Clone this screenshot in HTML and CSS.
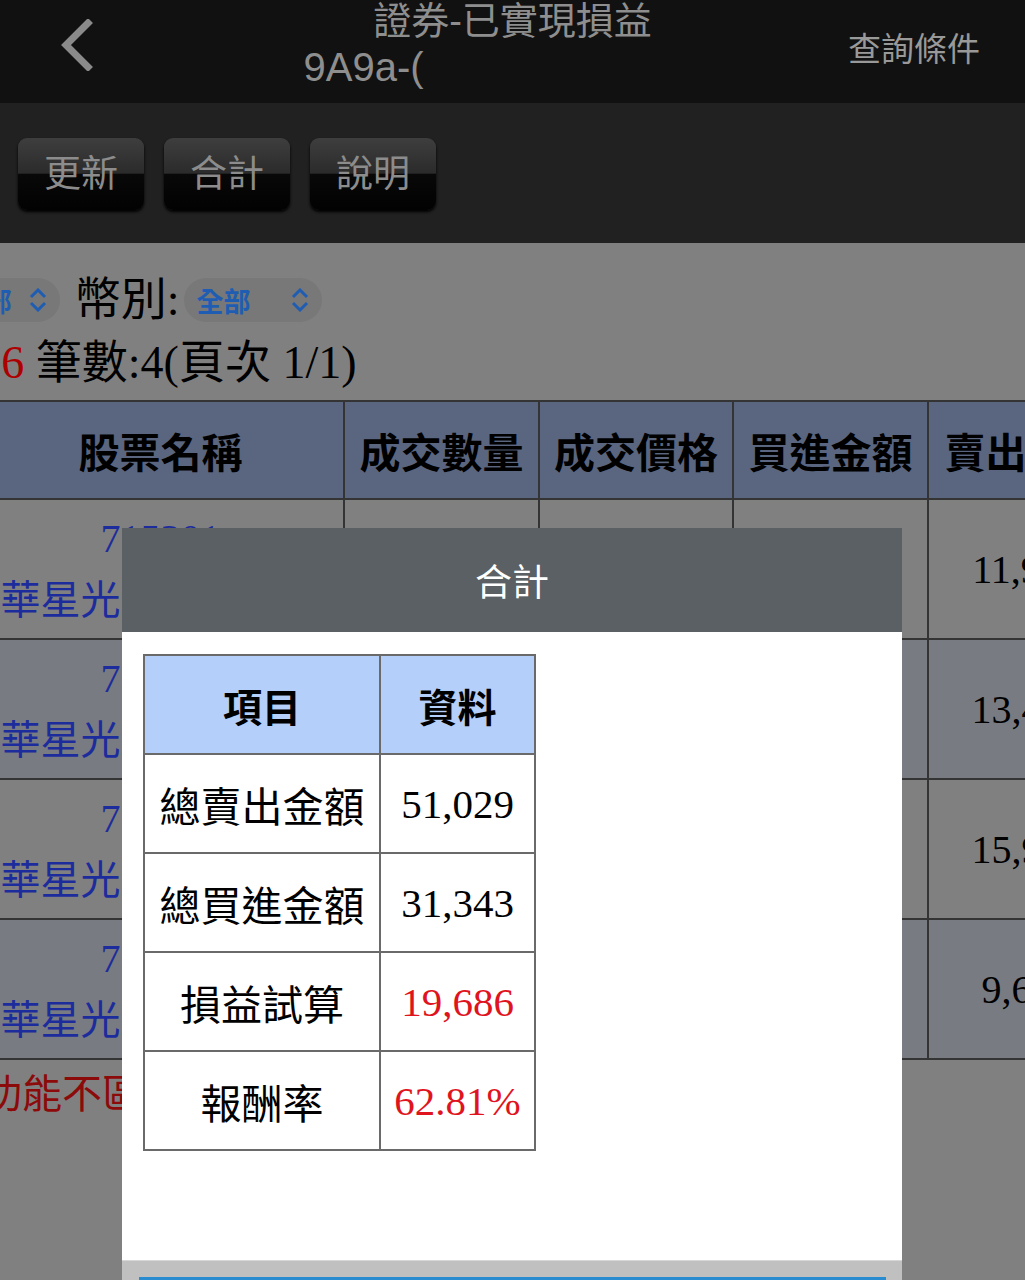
FILE: index.html
```html
<!DOCTYPE html>
<html lang="zh-Hant">
<head>
  <meta charset="utf-8">
  <meta name="viewport" content="width=device-width, initial-scale=1.0">
  <title>證券-已實現損益</title>
  <link rel="stylesheet" href="styles.css">
</head>
<body>
<div class="screen">

  <header class="navbar">
    <a class="back" href="#">
      <svg width="40" height="52" viewBox="0 0 40 52"><path d="M30 4 L8 26 L30 48" fill="none" stroke="#8a8a8a" stroke-width="7" stroke-linecap="square"/></svg>
    </a>
    <div class="nav-title">
      <div class="title">證券-已實現損益</div>
      <div class="subtitle">9A9a-(</div>
    </div>
    <a class="nav-action" href="#">查詢條件</a>
  </header>

  <div class="toolbar">
    <button class="tool-btn">更新</button>
    <button class="tool-btn">合計</button>
    <button class="tool-btn">說明</button>
  </div>

  <main class="content">
    <div class="filters">
      <span class="label">市場:</span>
      <span class="pill first">全部
        <svg width="18" height="24" viewBox="0 0 18 24"><path d="M2 9 L9 2 L16 9 M2 15 L9 22 L16 15" fill="none" stroke="#1f5db3" stroke-width="3"/></svg>
      </span>
      <span class="label">幣別:</span>
      <span class="pill">全部
        <svg width="18" height="24" viewBox="0 0 18 24"><path d="M2 9 L9 2 L16 9 M2 15 L9 22 L16 15" fill="none" stroke="#1f5db3" stroke-width="3"/></svg>
      </span>
    </div>

    <div class="summary">損益:<span class="red">19,686</span> 筆數:4(頁次 1/1)</div>

    <table class="grid">
      <tr>
        <th class="c1">股票名稱</th>
        <th class="c2">成交數量</th>
        <th class="c3">成交價格</th>
        <th class="c4">買進金額</th>
        <th class="c5">賣出金額</th>
      </tr>
      <tr>
        <td><span class="code">715301</span><span class="name">華星光凱基二八購</span></td>
        <td>2,000</td><td>5.96</td><td>7,348</td><td>11,916</td>
      </tr>
      <tr class="alt">
        <td><span class="code">715302</span><span class="name">華星光凱基二九購</span></td>
        <td>2,000</td><td>6.73</td><td>8,214</td><td>13,452</td>
      </tr>
      <tr>
        <td><span class="code">715303</span><span class="name">華星光凱基三零購</span></td>
        <td>2,000</td><td>8.00</td><td>9,806</td><td>15,998</td>
      </tr>
      <tr class="alt">
        <td><span class="code">715304</span><span class="name">華星光凱基三一購</span></td>
        <td>1,000</td><td>9.67</td><td>5,975</td><td>9,663</td>
      </tr>
    </table>

    <p class="note">本功能不區分幣別</p>
  </main>

  <div class="modal">
    <div class="modal-head">合計</div>
    <div class="modal-body">
      <table class="sum">
        <tr><th>項目</th><th>資料</th></tr>
        <tr><td class="item">總賣出金額</td><td class="val">51,029</td></tr>
        <tr><td class="item">總買進金額</td><td class="val">31,343</td></tr>
        <tr><td class="item">損益試算</td><td class="val red">19,686</td></tr>
        <tr><td class="item">報酬率</td><td class="val red">62.81%</td></tr>
      </table>
    </div>
    <div class="modal-foot">
      <button class="ok">確定</button>
    </div>
  </div>

</div>
</body>
</html>
```

FILE: styles.css
```css
html, body{
  margin: 0;
  padding: 0;
}
body{
  background: #808080;
  font-family: "Liberation Serif", "Noto Sans CJK TC", serif;
  overflow: hidden;
}
.screen{
  position: relative;
  width: 1025px;
  height: 1280px;
  overflow: hidden;
}

/* top bar */
.navbar{
  height: 103px;
  background: #111111;
  display: grid;
  grid-template-columns: 1fr auto 1fr;
  font-family: "Liberation Sans", "Noto Sans CJK TC", sans-serif;
}
.back{
  padding: 19px 0 0 58px;
  display: block;
}
.nav-title{
  display: flex;
  flex-direction: column;
  align-items: center;
}
.title{
  color: #8e8e8e;
  font-size: 38px;
  line-height: 42px;
}
.subtitle{
  width: 418px;
  color: #8e8e8e;
  font-size: 40px;
  line-height: 46px;
  margin-top: 2px;
}
.nav-action{
  justify-self: end;
  padding: 23px 45px 0 0;
  color: #999999;
  font-size: 33px;
  text-decoration: none;
}

/* buttons bar */
.toolbar{
  height: 140px;
  background: #212121;
  box-sizing: border-box;
  padding: 35px 18px;
  display: flex;
  gap: 20px;
}
.tool-btn{
  width: 126px;
  height: 72px;
  border: 0;
  border-radius: 9px;
  background: linear-gradient(to bottom, #3e3e3e 0%, #2b2b2b 49%, #080808 50%, #020202 100%);
  box-shadow: 0 2px 3px #000;
  color: #8c8c8c;
  font-family: "Liberation Sans", "Noto Sans CJK TC", sans-serif;
  font-size: 37px;
  padding: 0 0 6px 0;
}

/* list content */
.content{
  color: #000;
}
.filters{
  display: flex;
  align-items: center;
  height: 56px;
  margin: 29px 0 0 -187px;
  white-space: nowrap;
}
.label{
  font-size: 46px;
  line-height: 56px;
}
.pill{
  display: flex;
  align-items: center;
  justify-content: space-between;
  box-sizing: border-box;
  width: 138px;
  height: 44px;
  margin: 0 18px 0 4px;
  padding: 0 13px 0 13px;
  border-radius: 22px;
  background: #787878;
  color: #1f5db3;
  font-family: "Noto Sans CJK TC", sans-serif;
  font-weight: bold;
  font-size: 27px;
}
.pill.first{
  justify-content: flex-end;
  gap: 17px;
  margin-right: 15px;
}
.summary{
  font-size: 46px;
  line-height: 58px;
  margin: 6px 0 0 -207px;
  white-space: nowrap;
}
.red{
  color: #ad0000;
}

.grid{
  border-collapse: collapse;
  margin: 8px 0 0 -24px;
  table-layout: fixed;
  width: 1150px;
}
.grid th, .grid td{
  border: 2px solid #343434;
  text-align: center;
  padding: 0;
  white-space: nowrap;
  overflow: hidden;
}
.grid th{
  height: 96px;
  background: #5a6680;
  font-family: "Noto Sans CJK TC", sans-serif;
  font-weight: bold;
  font-size: 41px;
}
.grid .c1{ width: 365px; }
.grid .c2{ width: 193px; }
.grid .c3{ width: 192px; }
.grid .c4{ width: 193px; }
.grid td{
  height: 138px;
  font-size: 40px;
}
.grid tr.alt td{
  background: #787b81;
}
.code, .name{
  display: block;
  color: #1d2c9c;
}
.code{
  line-height: 40px;
}
.name{
  margin-top: 15px;
  line-height: 46px;
  font-family: "Noto Sans CJK TC", sans-serif;
}
.note{
  margin: 2px 0 0 -58px;
  color: #8c0a0a;
  font-family: "Noto Sans CJK TC", sans-serif;
  font-size: 40px;
  white-space: nowrap;
}

/* summary dialog */
.modal{
  position: absolute;
  left: 122px;
  top: 528px;
  width: 780px;
}
.modal-head{
  height: 104px;
  background: #5a6064;
  color: #ffffff;
  font-family: "Noto Sans CJK TC", sans-serif;
  font-size: 37px;
  line-height: 104px;
  text-align: center;
}
.modal-body{
  height: 628px;
  box-sizing: border-box;
  background: #ffffff;
  padding: 22px 21px;
}
.sum{
  border-collapse: collapse;
  border: 2px solid #4a4a4a;
}
.sum th, .sum td{
  border: 2px solid #6a6a6a;
  height: 97px;
  text-align: center;
  padding: 0;
}
.sum th{
  background: #b4cffa;
  font-family: "Noto Sans CJK TC", sans-serif;
  font-weight: bold;
  font-size: 39px;
}
.sum th:first-child, .sum td.item{
  width: 234px;
}
.sum th:last-child, .sum td.val{
  width: 153px;
}
.sum td.item{
  font-family: "Noto Sans CJK TC", sans-serif;
  font-size: 41px;
}
.sum td.val{
  font-size: 41px;
}
.sum td.red{
  color: #e0141e;
}
.modal-foot{
  background: #c0c0c0;
  border-top: 1px solid #d6d6d6;
  padding: 16px 16px 20px 17px;
}
.ok{
  display: block;
  width: 100%;
  height: 70px;
  border: 0;
  border-top: 3px solid #2a8cd0;
  background: #3d9ad8;
  color: #fff;
  font-size: 32px;
}
```
